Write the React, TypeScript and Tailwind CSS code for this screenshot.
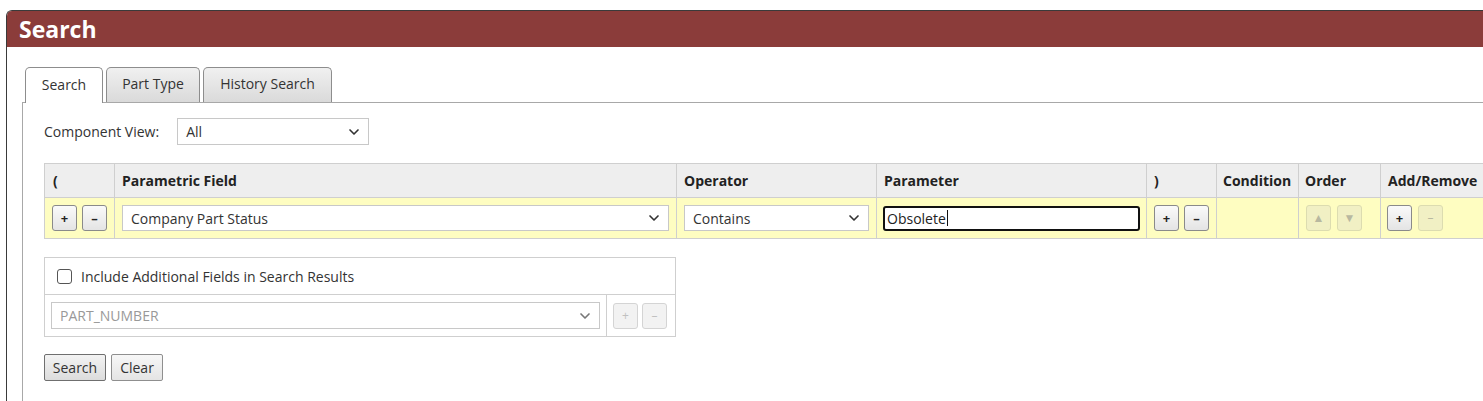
import { ChevronDown } from "lucide-react";

const font = { fontFamily: '"Open Sans", "Liberation Sans", sans-serif' };

function FakeSelect({ value, className, muted }: { value: string; className: string; muted?: boolean }) {
  return (
    <div
      className={`flex items-center justify-between border border-[#c8c8c8] bg-white pl-[8px] pr-[6px] text-[14px] ${
        muted ? "text-[#999]" : "text-[#333]"
      } ${className}`}
    >
      <span>{value}</span>
      <ChevronDown className={`size-[16px] ${muted ? "text-[#777]" : "text-[#333]"}`} strokeWidth={2.5} />
    </div>
  );
}

function SmallBtn({ label, disabled, tone }: { label: string; disabled?: boolean; tone?: "yellow" }) {
  if (disabled) {
    return (
      <div
        className={`grid h-[26px] w-[25px] place-items-center rounded-[3px] border text-[12px] ${
          tone === "yellow"
            ? "border-[#dcdcb0] bg-[#f1f0c4] text-[#b8b8a0]"
            : "border-[#d4d4d4] bg-[#f2f2f2] text-[#c0c0c0]"
        }`}
      >
        {label}
      </div>
    );
  }
  return (
    <div className="grid h-[26px] w-[25px] place-items-center rounded-[3px] border border-[#8a8a8a] bg-gradient-to-b from-[#fafafa] to-[#e4e4e4] text-[13px] font-bold leading-none text-[#222]">
      {label}
    </div>
  );
}

function Tab({ label, active, w }: { label: string; active?: boolean; w: string }) {
  return (
    <div
      className={`flex h-[35px] items-center justify-center rounded-t-[5px] border border-b-0 pb-[3px] text-[14px] text-[#333] ${w} ${
        active
          ? "relative z-10 -mb-px h-[36px] border-[#8d8d8d] bg-white"
          : "border-[#8d8d8d] bg-gradient-to-b from-[#f0f0f0] to-[#dadada]"
      }`}
    >
      {label}
    </div>
  );
}

export default function App() {
  return (
    <div className="h-[401px] w-[1483px] overflow-hidden bg-white text-[#333]" style={font}>
      <div className="pl-[6px] pt-[10px]">
        <div className="w-[1560px] rounded-tl-[6px] border-l border-t border-[#3a3a3a]">
          <div className="flex h-[36px] items-center rounded-tl-[5px] bg-[#8b3c3a] pl-[12px] text-[23px] font-bold text-white">
            Search
          </div>
          <div className="pl-[15px] pt-[20px]">
            <div className="flex gap-[3px] pl-[3px]">
              <Tab label="Search" active w="w-[78px]" />
              <Tab label="Part Type" w="w-[94px]" />
              <Tab label="History Search" w="w-[129px]" />
            </div>
            <div className="h-[300px] border-l border-t border-[#a8a8a8] pl-[21px] pt-[15px]">
              <div className="flex items-center gap-[18px] text-[14px]">
                <span>Component View:</span>
                <FakeSelect value="All" className="h-[27px] w-[192px]" />
              </div>

              <table className="mt-[18px] border-collapse text-[14px]">
                <thead>
                  <tr className="h-[34px] bg-[#eeeeee] text-left font-semibold text-[#222]">
                    <th className="w-[67px] border border-[#cfcfcf] px-[8px]">(</th>
                    <th className="w-[562px] border border-[#cfcfcf] px-[7px]">Parametric Field</th>
                    <th className="w-[200px] border border-[#cfcfcf] px-[7px]">Operator</th>
                    <th className="w-[270px] border border-[#cfcfcf] px-[7px]">Parameter</th>
                    <th className="w-[68px] border border-[#cfcfcf] px-[7px]">)</th>
                    <th className="w-[82px] border border-[#cfcfcf] px-[6px]">Condition</th>
                    <th className="w-[82px] border border-[#cfcfcf] px-[6px]">Order</th>
                    <th className="w-[160px] border border-[#cfcfcf] px-[7px]">Add/Remove</th>
                  </tr>
                </thead>
                <tbody>
                  <tr className="h-[41px] bg-[#fefdc1]">
                    <td className="border border-[#cfcfcf] px-[7px]">
                      <div className="flex gap-[5px]">
                        <SmallBtn label="+" />
                        <SmallBtn label="–" />
                      </div>
                    </td>
                    <td className="border border-[#cfcfcf] px-[7px]">
                      <FakeSelect value="Company Part Status" className="h-[26px] w-full" />
                    </td>
                    <td className="border border-[#cfcfcf] px-[7px]">
                      <FakeSelect value="Contains" className="h-[26px] w-full" />
                    </td>
                    <td className="border border-[#cfcfcf] px-[6px]">
                      <div className="flex h-[25px] items-center rounded-[3px] border-2 border-[#111] bg-white pl-[2px] text-[14px] text-[#222]">
                        Obsolete
                        <span className="ml-px h-[16px] w-px bg-[#111]" />
                      </div>
                    </td>
                    <td className="border border-[#cfcfcf] px-[7px]">
                      <div className="flex gap-[5px]">
                        <SmallBtn label="+" />
                        <SmallBtn label="–" />
                      </div>
                    </td>
                    <td className="border border-[#cfcfcf]" />
                    <td className="border border-[#cfcfcf] px-[7px]">
                      <div className="flex gap-[6px]">
                        <SmallBtn label="▲" disabled tone="yellow" />
                        <SmallBtn label="▼" disabled tone="yellow" />
                      </div>
                    </td>
                    <td className="border border-[#cfcfcf] px-[6px]">
                      <div className="flex gap-[6px]">
                        <SmallBtn label="+" />
                        <SmallBtn label="–" disabled tone="yellow" />
                      </div>
                    </td>
                  </tr>
                </tbody>
              </table>

              <div className="mt-[18px] w-[632px] border border-[#cfcfcf]">
                <div className="flex h-[37px] items-center gap-[9px] border-b border-[#cfcfcf] pl-[12px] text-[14px]">
                  <span className="size-[15px] rounded-[3px] border border-[#555] bg-white" />
                  Include Additional Fields in Search Results
                </div>
                <div className="flex h-[41px] items-center">
                  <div className="flex h-full w-[562px] items-center border-r border-[#cfcfcf] pl-[6px]">
                    <FakeSelect value="PART_NUMBER" muted className="h-[27px] w-[549px]" />
                  </div>
                  <div className="flex gap-[4px] pl-[6px]">
                    <SmallBtn label="+" disabled />
                    <SmallBtn label="–" disabled />
                  </div>
                </div>
              </div>

              <div className="mt-[17px] flex gap-[5px] text-[14px]">
                <div className="flex h-[27px] w-[62px] items-center justify-center rounded-[2px] border border-[#6f6f6f] bg-gradient-to-b from-[#f3f3f3] to-[#dcdcdc]">
                  Search
                </div>
                <div className="flex h-[27px] w-[52px] items-center justify-center rounded-[2px] border border-[#8f8f8f] bg-gradient-to-b from-[#f7f7f7] to-[#e4e4e4]">
                  Clear
                </div>
              </div>
            </div>
          </div>
        </div>
      </div>
    </div>
  );
}
